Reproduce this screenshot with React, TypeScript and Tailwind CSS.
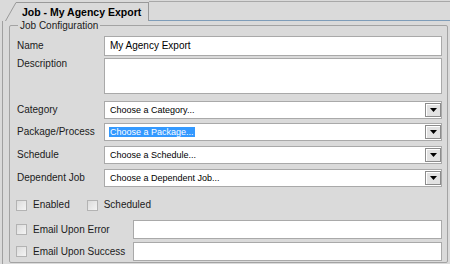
import React from 'react'

const Arrow = () => (
  <div className="flex h-[14px] w-[16px] items-center justify-center border border-[#8c8c8c] bg-[#e2e2e2] shadow-[inset_1px_1px_0_#ffffff]">
    <svg width="7" height="4" viewBox="0 0 7 4">
      <path d="M0 0H7L3.5 4Z" fill="#000" />
    </svg>
  </div>
)

function Field({ label, children, className = '' }: { label: string; children: React.ReactNode; className?: string }) {
  return (
    <div className={`flex items-center ${className}`}>
      <div className="w-[94px] pl-[7px] text-[10px] leading-[12px] text-[#1b1b1b]">{label}</div>
      {children}
    </div>
  )
}

function Select({ label, text, selected = false, className = '' }: { label: string; text: string; selected?: boolean; className?: string }) {
  return (
    <Field label={label} className={className}>
      <div className="mr-[5px] flex h-[18px] flex-1 items-center border border-[#a9a9a9] bg-white pl-[5px]">
        <div className="flex-1 text-[9px] leading-[12px] text-black">
          {selected ? (
            <span className="-ml-[1px] bg-[#3399ff] px-[1px] text-white">{text}</span>
          ) : (
            text
          )}
        </div>
        <Arrow />
      </div>
    </Field>
  )
}

function Check({ label, className = '' }: { label: string; className?: string }) {
  return (
    <div className={`flex items-center ${className}`}>
      <div className="h-[11px] w-[11px] border border-[#b3b3b3] bg-gradient-to-br from-[#dcdcdc] to-[#f4f4f4]" />
      <span className="ml-[6px] text-[10px] leading-[12px] text-[#1b1b1b]">{label}</span>
    </div>
  )
}

export default function App() {
  return (
    <div className="h-[264px] w-[450px] overflow-hidden bg-[#dadada] font-['Liberation_Sans',Arial,sans-serif]">
      {/* tab strip */}
      <div className="flex h-[21px]">
        <div className="w-[5px]" />
        <svg width="12" height="21" viewBox="0 0 12 21" className="shrink-0">
          <path d="M0.5 21 L11 2.5 L12 2.5" fill="none" stroke="#999999" />
        </svg>
        <div className="mt-[2px] flex w-[132px] items-center border-t border-r border-[#999999] pl-[5px] text-[10.5px] font-bold leading-[12px] text-black">
          Job - My Agency Export
        </div>
        <div className="mt-[1px] flex-1 border-t border-b border-t-[#a8a8a8] border-b-[#7f9db9]" />
      </div>

      {/* panel */}
      <div className="ml-[2px] h-[243px] border-l border-[#a0a0a0] pl-[6px] pt-[4px]">
        <div className="relative h-[238px] w-[439px] rounded-[2px] border border-[#a3a3a3] pt-[10px]">
          <span className="absolute -top-[6px] left-[8px] bg-[#dadada] px-[2px] text-[10px] leading-[12px] text-[#1b1b1b]">
            Job Configuration
          </span>

          <Field label="Name">
            <div className="mr-[5px] flex h-[20px] flex-1 items-center border border-[#a9a9a9] bg-white pl-[5px] text-[10px] leading-[12px] text-black">
              My Agency Export
            </div>
          </Field>

          <div className="mt-[2px] flex items-start">
            <div className="w-[94px] pl-[7px] text-[10px] leading-[12px] text-[#1b1b1b]">Description</div>
            <div className="mr-[5px] h-[36px] flex-1 border border-[#a9a9a9] bg-white" />
          </div>

          <Select label="Category" text="Choose a Category..." className="mt-[7px]" />
          <Select label="Package/Process" text="Choose a Package..." selected className="mt-[4px]" />
          <Select label="Schedule" text="Choose a Schedule..." className="mt-[5px]" />
          <Select label="Dependent Job" text="Choose a Dependent Job..." className="mt-[5px]" />

          <div className="mt-[12px] flex items-center pl-[6px]">
            <Check label="Enabled" />
            <Check label="Scheduled" className="ml-[17px]" />
          </div>

          <div className="mt-[9px] flex items-center pl-[6px]">
            <Check label="Email Upon Error" className="w-[117px]" />
            <div className="mr-[5px] h-[19px] flex-1 border border-[#a9a9a9] bg-white" />
          </div>
          <div className="mt-[3px] flex items-center pl-[6px]">
            <Check label="Email Upon Success" className="w-[117px]" />
            <div className="mr-[5px] h-[19px] flex-1 border border-[#a9a9a9] bg-white" />
          </div>
        </div>
      </div>
    </div>
  )
}
